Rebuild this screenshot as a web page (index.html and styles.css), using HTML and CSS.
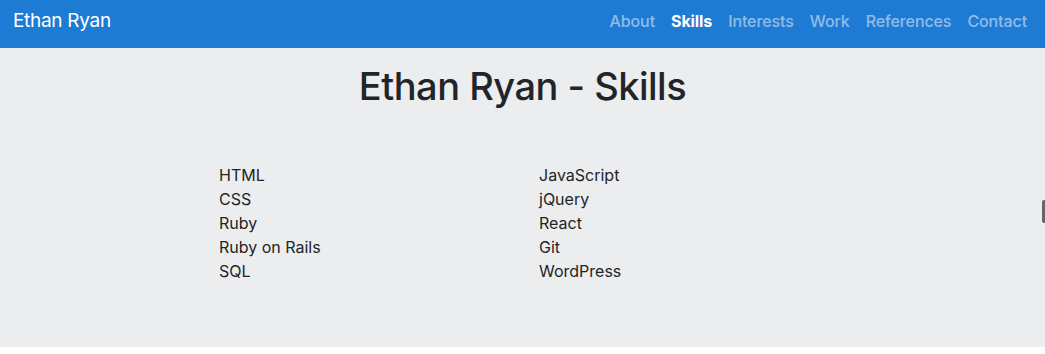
FILE: index.html
```html
<!DOCTYPE html>
<html lang="en">
<head>
  <meta charset="UTF-8" />
  <meta name="viewport" content="width=device-width, initial-scale=1.0" />
  <title>Ethan Ryan - Skills</title>
  <link rel="stylesheet" href="styles.css">
</head>
<body>
  <nav class="navbar">
    <a class="brand" href="#">Ethan Ryan</a>
    <ul class="nav-links">
      <li><a href="#">About</a></li>
      <li><a href="#" class="active">Skills</a></li>
      <li><a href="#">Interests</a></li>
      <li><a href="#">Work</a></li>
      <li><a href="#">References</a></li>
      <li><a href="#">Contact</a></li>
    </ul>
  </nav>

  <main class="page">
    <h1>Ethan Ryan - Skills</h1>
    <div class="skills">
      <ul class="skill-col">
        <li>HTML</li>
        <li>CSS</li>
        <li>Ruby</li>
        <li>Ruby on Rails</li>
        <li>SQL</li>
      </ul>
      <ul class="skill-col">
        <li>JavaScript</li>
        <li>jQuery</li>
        <li>React</li>
        <li>Git</li>
        <li>WordPress</li>
      </ul>
    </div>
  </main>

  <div class="side-tab"></div>
</body>
</html>
```

FILE: styles.css
```css
body { font-family: Inter, "Noto Sans", sans-serif; margin: 0; background-color: #fff; color: #212529; font-size: 16px; line-height: 24px; }
a { text-decoration: none; }
.navbar { display: flex; align-items: center; justify-content: space-between; height: 42px; padding: 0 10px 6px 13px; background-color: #1e7bd4; }
.brand { color: #fff; font-size: 19px; letter-spacing: -0.3px; }
.nav-links { display: flex; list-style: none; margin: 0; padding: 0; }
.nav-links a { display: block; padding: 0 8px; color: rgba(255,255,255,0.5); font-size: 16px; font-weight: 500; letter-spacing: -0.1px; }
.nav-links a.active { color: #fff; font-weight: 700; }
.page { background-color: #ecedef; height: 299px; overflow: hidden; }
.page h1 { margin: 14px 0 0; text-align: center; font-size: 38px; font-weight: 500; line-height: 48px; letter-spacing: -0.5px; }
.skills { display: flex; margin-top: 53px; padding-left: 219px; }
.skill-col { list-style: none; margin: 0; padding: 0; width: 320px; }
.side-tab { position: fixed; right: 0; top: 200px; width: 3px; height: 23px; background-color: #666; border-radius: 2px 0 0 2px; }
```
